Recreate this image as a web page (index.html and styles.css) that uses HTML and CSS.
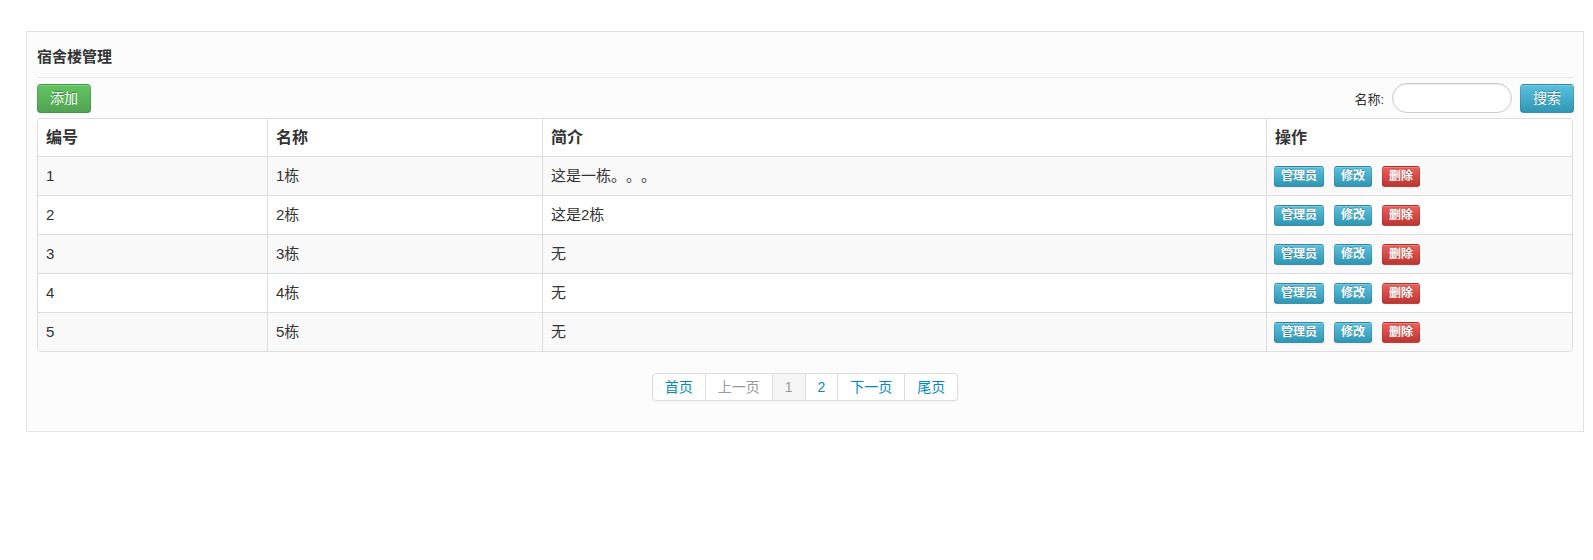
FILE: index.html
```html
<!DOCTYPE html>
<html lang="zh-CN">
<head>
<meta charset="utf-8">
<title>宿舍楼管理</title>
<link rel="stylesheet" href="styles.css">
</head>
<body>
<div class="panel">
  <div class="panel-title">宿舍楼管理</div>
  <div class="toolbar">
    <button class="btn btn-success">添加</button>
    <div class="search">
      <label class="search-label">名称:</label>
      <input class="search-input" type="text">
      <button class="btn btn-info">搜索</button>
    </div>
  </div>
  <table class="grid">
    <thead>
      <tr><th class="c1">编号</th><th class="c2">名称</th><th class="c3">简介</th><th class="c4">操作</th></tr>
    </thead>
    <tbody>
      <tr><td>1</td><td>1栋</td><td>这是一栋。。。</td><td class="ops"><span class="mini info">管理员</span><span class="mini info">修改</span><span class="mini danger">删除</span></td></tr>
      <tr><td>2</td><td>2栋</td><td>这是2栋</td><td class="ops"><span class="mini info">管理员</span><span class="mini info">修改</span><span class="mini danger">删除</span></td></tr>
      <tr><td>3</td><td>3栋</td><td>无</td><td class="ops"><span class="mini info">管理员</span><span class="mini info">修改</span><span class="mini danger">删除</span></td></tr>
      <tr><td>4</td><td>4栋</td><td>无</td><td class="ops"><span class="mini info">管理员</span><span class="mini info">修改</span><span class="mini danger">删除</span></td></tr>
      <tr><td>5</td><td>5栋</td><td>无</td><td class="ops"><span class="mini info">管理员</span><span class="mini info">修改</span><span class="mini danger">删除</span></td></tr>
    </tbody>
  </table>
  <div class="pager-wrap">
    <ul class="pager">
      <li><a class="pg link">首页</a></li>
      <li><a class="pg off">上一页</a></li>
      <li><a class="pg active">1</a></li>
      <li><a class="pg link">2</a></li>
      <li><a class="pg link">下一页</a></li>
      <li><a class="pg link">尾页</a></li>
    </ul>
  </div>
</div>
</body>
</html>
```
FILE: styles.css
```css
html, body {
  margin: 0;
  padding: 0;
  background: #ffffff;
}
body {
  font-family: "Liberation Sans", "Noto Sans CJK SC", sans-serif;
  color: #333333;
  font-size: 14px;
  text-spacing-trim: space-all;
}
.panel {
  margin: 31px 9px 0 26px;
  border: 1px solid #e3e3e3;
  background: #fcfcfc;
  padding: 0 10px 30px 10px;
  box-sizing: border-box;
  height: 401px;
}
.panel-title {
  font-size: 15px;
  font-weight: bold;
  line-height: 20px;
  padding: 15px 0 10px 0;
  border-bottom: 1px solid #e5e5e5;
}
.toolbar {
  margin-top: 5px;
  display: flex;
  justify-content: space-between;
  align-items: center;
}
.search {
  display: flex;
  align-items: center;
}
.search-label {
  font-size: 13px;
  color: #333;
  margin-right: 8px;
}
.search-input {
  width: 120px;
  height: 30px;
  box-sizing: border-box;
  border: 1px solid #cccccc;
  border-radius: 15px;
  background: #fff;
  box-shadow: inset 0 1px 1px rgba(0,0,0,0.075);
  margin: 0 8px 0 0;
  padding: 0 10px;
}
.btn {
  font-family: "Liberation Sans", "Noto Sans CJK SC", sans-serif;
  font-size: 14px;
  line-height: 19px;
  padding: 4px 12px;
  border-radius: 4px;
  color: #ffffff;
  text-shadow: 0 -1px 0 rgba(0,0,0,0.25);
  border: 1px solid rgba(0,0,0,0.1);
  border-bottom-color: rgba(0,0,0,0.25);
  box-shadow: inset 0 1px 0 rgba(255,255,255,0.2), 0 1px 2px rgba(0,0,0,0.05);
  margin: 0;
}
.btn-success {
  background: linear-gradient(to bottom, #62c462, #51a351);
}
.btn-info {
  background: linear-gradient(to bottom, #5bc0de, #2f96b4);
  margin-right: -1px;
}
.grid {
  margin-top: 5px;
  width: 1536px;
  border-collapse: separate;
  border-spacing: 0;
  border: 1px solid #dddddd;
  border-radius: 4px;
  table-layout: fixed;
}
.grid th, .grid td {
  text-align: left;
  padding: 8px 8px;
  border-left: 1px solid #dddddd;
  border-top: 1px solid #dddddd;
  vertical-align: middle;
}
.grid th {
  font-size: 16px;
  font-weight: bold;
  line-height: 21px;
  border-top: none;
  background: #ffffff;
}
.grid th:first-child, .grid td:first-child {
  border-left: none;
}
.grid thead tr th:first-child { border-top-left-radius: 4px; }
.grid thead tr th:last-child { border-top-right-radius: 4px; }
.grid td {
  font-size: 15px;
  line-height: 22px;
}
.grid tbody tr:nth-child(odd) td { background: #f9f9f9; }
.grid tbody tr:nth-child(even) td { background: #ffffff; }
.grid tbody tr:last-child td:first-child { border-bottom-left-radius: 4px; }
.grid tbody tr:last-child td:last-child { border-bottom-right-radius: 4px; }
.c1 { width: 213px; }
.c2 { width: 258px; }
.c3 { width: 707px; }
.c4 { width: auto; }
.grid td.ops {
  padding-top: 0;
  padding-bottom: 0;
  padding-left: 7px;
  font-size: 0;
  line-height: 0;
}
.mini {
  display: inline-block;
  vertical-align: middle;
  font-size: 12px;
  font-weight: bold;
  line-height: 19px;
  padding: 0 6px;
  margin-right: 10px;
  color: #fff;
  border-radius: 3px;
  border: 1px solid rgba(0,0,0,0.1);
  border-bottom-color: rgba(0,0,0,0.25);
  text-shadow: 0 -1px 0 rgba(0,0,0,0.25);
  box-shadow: inset 0 1px 0 rgba(255,255,255,0.2), 0 1px 2px rgba(0,0,0,0.05);
}
.mini.info { background: linear-gradient(to bottom, #5bc0de, #2f96b4); }
.mini.danger { background: linear-gradient(to bottom, #ee5f5b, #bd362f); }
.pager-wrap {
  margin-top: 21px;
  display: flex;
  justify-content: center;
}
.pager {
  list-style: none;
  margin: 0;
  padding: 0;
  display: flex;
  border-radius: 4px;
  box-shadow: 0 1px 2px rgba(0,0,0,0.05);
}
.pg {
  display: block;
  font-size: 14px;
  line-height: 18px;
  padding: 4px 12px;
  border: 1px solid #dddddd;
  border-left-width: 0;
  background: #ffffff;
}
.pager li:first-child .pg {
  border-left-width: 1px;
  border-radius: 4px 0 0 4px;
}
.pager li:last-child .pg {
  border-radius: 0 4px 4px 0;
}
.pg.link { color: #0088cc; }
.pg.off { color: #999999; }
.pg.active { color: #999999; background: #f5f5f5; }
```
